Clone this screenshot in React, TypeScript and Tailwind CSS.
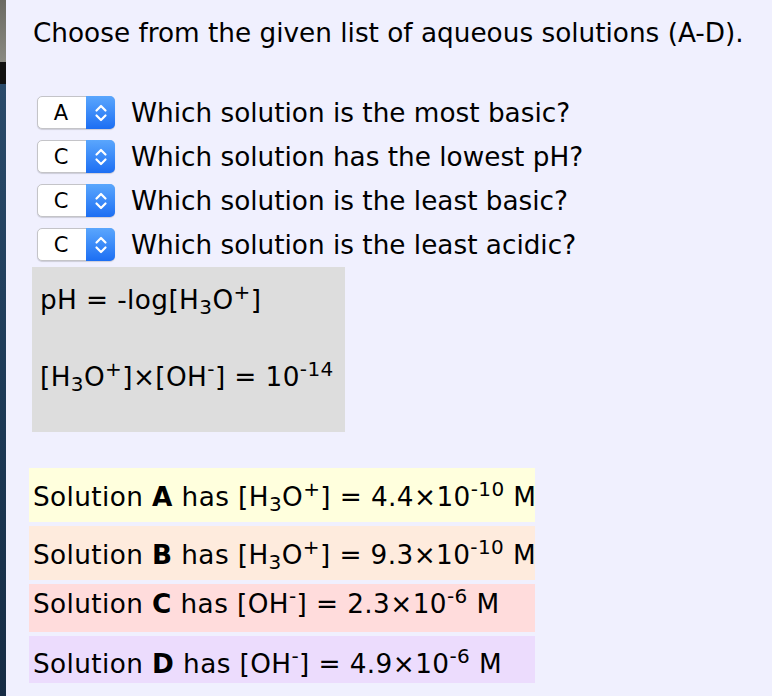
import React from 'react';

const QUESTIONS: { value: string; text: string }[] = [
  { value: 'A', text: 'Which solution is the most basic?' },
  { value: 'C', text: 'Which solution has the lowest pH?' },
  { value: 'C', text: 'Which solution is the least basic?' },
  { value: 'C', text: 'Which solution is the least acidic?' },
];

const H3O = () => (
  <>
    [H<sub className="text-[20px]">3</sub>O<sup className="text-[20px]">+</sup>]
  </>
);

const OH = () => (
  <>
    [OH<sup className="text-[20px]">-</sup>]
  </>
);

const Chevrons = () => (
  <svg width="14" height="22" viewBox="0 0 14 22" fill="none" stroke="white" strokeWidth="2.2" strokeLinecap="round" strokeLinejoin="round">
    <path d="M2.5 8.5 L7 4 L11.5 8.5" />
    <path d="M2.5 13.5 L7 18 L11.5 13.5" />
  </svg>
);

const FakeSelect = ({ value }: { value: string }) => (
  <div className="flex h-[33px] w-[78px] shrink-0 rounded-[5px] border border-[#c4c4c8] bg-white shadow-[0_1px_1px_rgba(0,0,0,0.15)]">
    <div className="flex flex-1 items-center justify-center pr-[2px] text-[21px] text-black [font-family:'DejaVu_Sans',sans-serif]">
      {value}
    </div>
    <div className="-my-px -mr-px flex w-[29px] items-center justify-center rounded-r-[5px] bg-gradient-to-b from-[#5aa6fd] to-[#1c6ef3]">
      <Chevrons />
    </div>
  </div>
);

export default function App() {
  return (
    <div className="flex h-[696px] w-[772px] overflow-hidden bg-[#f0f0fe] text-[26.3px] leading-[30px] text-black [font-family:'DejaVu_Sans',Verdana,sans-serif]">
      {/* sliver of desktop on the left */}
      <div className="flex w-[6px] shrink-0 flex-col">
        <div className="h-[62px] bg-gradient-to-b from-[#6b6a62] to-[#8a8a82]" />
        <div className="h-[22px] bg-[#111]" />
        <div className="flex-1 bg-gradient-to-b from-[#2a4a6a] via-[#1d3a57] to-[#162c44]" />
      </div>

      <div className="flex flex-1 flex-col">
        <div className="ml-[27px] mt-[18px] whitespace-nowrap">
          Choose from the given list of aqueous solutions (A-D).
        </div>

        <div className="ml-[31px] mt-[48px] flex flex-col gap-[11px]">
          {QUESTIONS.map((q, i) => (
            <div key={i} className="flex items-center gap-[16px]">
              <FakeSelect value={q.value} />
              <span className="whitespace-nowrap">{q.text}</span>
            </div>
          ))}
        </div>

        <div className="ml-[26px] mt-[6px] h-[165px] w-[313px] bg-[#dddddd] pl-[8px] pt-[18px] tracking-[0.4px]">
          <div className="whitespace-nowrap">
            pH = -log<H3O />
          </div>
          <div className="mt-[47px] whitespace-nowrap">
            <H3O />×<OH /> = 10<sup className="text-[20px]">-14</sup>
          </div>
        </div>

        <div className="ml-[23px] mt-[36px] flex w-[506px] flex-col gap-[4px] whitespace-nowrap tracking-[0.4px]">
          <div className="h-[54px] bg-[#ffffdd] pl-[4px] pt-[14px]">
            Solution <b>A</b> has <H3O /> = 4.4×10<sup className="text-[20px]">-10</sup> M
          </div>
          <div className="h-[54px] bg-[#feebdd] pl-[4px] pt-[14px]">
            Solution <b>B</b> has <H3O /> = 9.3×10<sup className="text-[20px]">-10</sup> M
          </div>
          <div className="h-[48px] bg-[#ffdcdc] pl-[4px] pt-[5px]">
            Solution <b>C</b> has <OH /> = 2.3×10<sup className="text-[20px]">-6</sup> M
          </div>
          <div className="h-[47px] bg-[#ecdcfd] pl-[4px] pt-[13px]">
            Solution <b>D</b> has <OH /> = 4.9×10<sup className="text-[20px]">-6</sup> M
          </div>
        </div>
      </div>
    </div>
  );
}
